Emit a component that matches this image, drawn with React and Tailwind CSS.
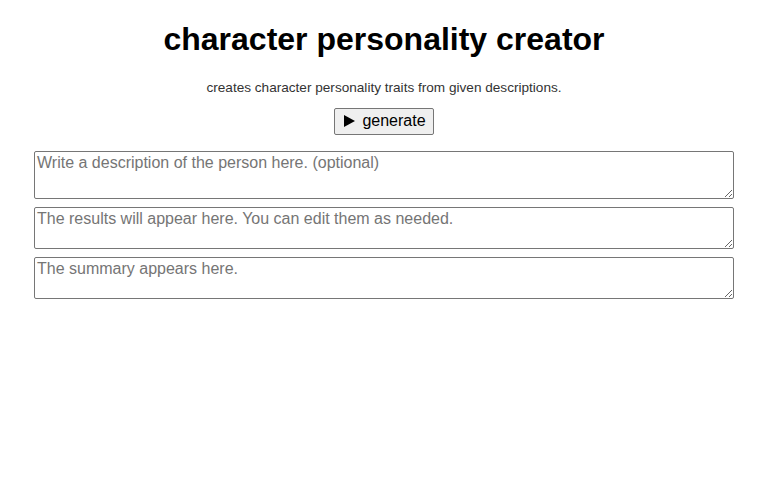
import React from 'react';

const fields = [
  { placeholder: 'Write a description of the person here. (optional)', h: 'h-[48px]' },
  { placeholder: 'The results will appear here. You can edit them as needed.', h: 'h-[42px]' },
  { placeholder: 'The summary appears here.', h: 'h-[42px]' },
];

export default function App() {
  return (
    <div className="min-h-screen bg-white px-[34px] font-['Liberation_Sans',Arial,sans-serif] text-black">
      <h1 className="pt-[21px] text-center text-[32px] font-bold leading-[37px]">
        character personality creator
      </h1>
      <p className="mt-[22px] text-center text-[13.6px] leading-[15px] text-[#333]">
        creates character personality traits from given descriptions.
      </p>
      <div className="mt-[13px] flex justify-center">
        <button className="flex h-[27px] w-[100px] items-center justify-center gap-[7px] rounded-[2px] border border-[#767676] bg-[#efefef] pb-[2px] pl-[2px] text-[16px] leading-[18px] text-black">
          <svg width="11" height="12" viewBox="0 0 11 12" className="mt-[1px]">
            <path d="M0 0L11 6L0 12Z" fill="#000" />
          </svg>
          <span>generate</span>
        </button>
      </div>
      <div className="mt-[16px] flex flex-col gap-[8px]">
        {fields.map((f, i) => (
          <textarea
            key={i}
            placeholder={f.placeholder}
            className={`${f.h} w-full rounded-[2px] border border-[#767676] px-[2px] py-[1px] text-[16px] leading-[19px] placeholder:text-[#757575] focus:outline-none`}
          />
        ))}
      </div>
    </div>
  );
}
